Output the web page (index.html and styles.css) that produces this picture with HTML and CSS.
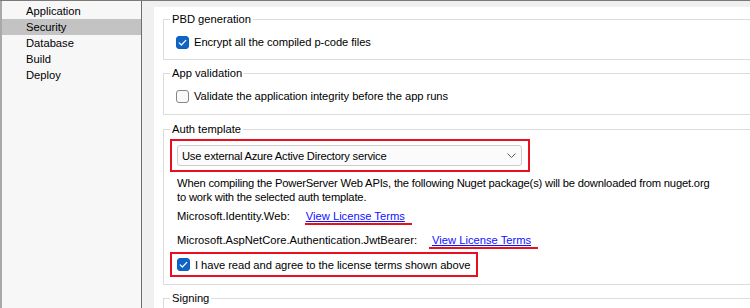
FILE: index.html
```html
<!DOCTYPE html>
<html lang="en">
<head>
<meta charset="utf-8">
<title>Security settings</title>
<link rel="stylesheet" href="styles.css">
</head>
<body>
<div class="window">
  <nav class="sidebar">
    <ul class="nav-list">
      <li class="nav-item">Application</li>
      <li class="nav-item is-selected">Security</li>
      <li class="nav-item">Database</li>
      <li class="nav-item">Build</li>
      <li class="nav-item">Deploy</li>
    </ul>
  </nav>
  <main class="main">
    <div class="panel">
      <fieldset class="group group-pbd">
        <legend class="group-title">PBD generation</legend>
        <label class="check-row">
          <span class="checkbox is-checked"><svg viewBox="0 0 13 13" width="13" height="13"><path d="M3.2 6.8 L5.4 9 L9.8 4.4" fill="none" stroke="#fff" stroke-width="1.2" stroke-linecap="round" stroke-linejoin="round"/></svg></span>
          <span class="check-label">Encrypt all the compiled p-code files</span>
        </label>
      </fieldset>

      <fieldset class="group group-app">
        <legend class="group-title">App validation</legend>
        <label class="check-row">
          <span class="checkbox"></span>
          <span class="check-label">Validate the application integrity before the app runs</span>
        </label>
      </fieldset>

      <fieldset class="group group-auth">
        <legend class="group-title">Auth template</legend>
        <div class="highlight highlight-select">
          <div class="select">
            <span class="select-value">Use external Azure Active Directory service</span>
            <svg class="select-arrow" viewBox="0 0 9 5" width="9" height="5"><path d="M0.5 0.5 L4.5 4.5 L8.5 0.5" fill="none" stroke="#5a5a5a" stroke-width="1"/></svg>
          </div>
        </div>
        <p class="note">When compiling the PowerServer Web APIs, the following Nuget package(s) will be downloaded from nuget.org<br>to work with the selected auth template.</p>
        <div class="pkg-row pkg-row-first">
          <span class="pkg-name">Microsoft.Identity.Web:</span>
          <span class="underline-mark mark-one"><a class="link" href="#">View License Terms</a></span>
        </div>
        <div class="pkg-row pkg-row-second">
          <span class="pkg-name">Microsoft.AspNetCore.Authentication.JwtBearer:</span>
          <span class="underline-mark mark-two"><a class="link" href="#">View License Terms</a></span>
        </div>
        <div class="highlight highlight-agree">
          <label class="check-row agree-row">
            <span class="checkbox is-checked"><svg viewBox="0 0 13 13" width="13" height="13"><path d="M3.2 6.8 L5.4 9 L9.8 4.4" fill="none" stroke="#fff" stroke-width="1.2" stroke-linecap="round" stroke-linejoin="round"/></svg></span>
            <span class="check-label">I have read and agree to the license terms shown above</span>
          </label>
        </div>
      </fieldset>

      <fieldset class="group group-signing">
        <legend class="group-title">Signing</legend>
        <div class="signing-body"></div>
      </fieldset>
    </div>
  </main>
</div>
</body>
</html>
```

FILE: styles.css
```css
* { box-sizing: border-box; }

html, body {
  margin: 0;
  padding: 0;
  width: 750px;
  height: 308px;
  overflow: hidden;
}

body {
  font-family: "Liberation Sans", Arial, sans-serif;
  font-size: 11.2px;
  color: #000;
  background: #f0f0f0;
}

.window {
  display: flex;
  height: 308px;
  border-top: 1px solid #7a7a7a;
}

/* Sidebar */
.sidebar {
  width: 142px;
  flex: none;
  background: #f7f7f7;
  border-left: 2px solid #a9a9a9;
  border-right: 1px solid #6e6e6e;
  padding-top: 2px;
}

.nav-list {
  list-style: none;
  margin: 0;
  padding: 0;
}

.nav-item {
  height: 16px;
  line-height: 16px;
  padding-left: 24px;
  white-space: nowrap;
}

.nav-item.is-selected {
  background: #c3c3c3;
}

/* Main area */
.main {
  flex: 1;
  display: flex;
  flex-direction: column;
  padding: 6px 0 0 12px;
  min-width: 0;
}

.panel {
  flex: 1;
  background: #fff;
  overflow: hidden;
  padding: 5px 0 0 9px;
}

/* Group boxes */
.group {
  width: 700px;
  margin: 0 0 6px 0;
  border: 1px solid #dcdcdc;
  padding: 7px 0 9px 12px;
  min-width: 0;
}

.group-title {
  margin-left: -6px;
  padding: 0 2px;
  line-height: 15px;
  height: 15px;
}

.group-app {
  padding-bottom: 10px;
  margin-bottom: 7px;
}

.group-auth {
  padding: 2px 0 7px 12px;
}

.group-signing {
  padding-top: 6px;
}

.signing-body {
  height: 30px;
}

/* Checkbox rows */
.check-row {
  display: flex;
  align-items: center;
  height: 16px;
  gap: 5px;
  white-space: nowrap;
}

.check-label {
  letter-spacing: -0.06px;
}

.checkbox {
  width: 13px;
  height: 13px;
  flex: none;
  border: 1px solid #868686;
  border-radius: 3px;
  background: #f9f9f9;
  display: flex;
}

.checkbox.is-checked {
  border-color: #0a5fc0;
  background: #0f64c4;
}

.checkbox svg {
  margin: -1px;
}

/* Red annotation boxes */
.highlight {
  border: 2px solid #e8101e;
  margin-left: -6px;
  width: fit-content;
}

.highlight-select {
  padding: 4px 6px 4px 5px;
}

.highlight-agree {
  margin-top: 3px;
  padding: 0 6px 0 5px;
}

.agree-row {
  height: 21px;
}

/* Dropdown */
.select {
  width: 345px;
  height: 21px;
  display: flex;
  align-items: center;
  justify-content: space-between;
  border: 1px solid #cccccc;
  border-radius: 3px;
  background: #fbfbfb;
  padding: 0 5px 0 4px;
  white-space: nowrap;
}

.select-value {
  letter-spacing: -0.22px;
}

.select-arrow {
  flex: none;
}

/* Texts */
.note {
  margin: 4px 0 0 1px;
  line-height: 14px;
  white-space: nowrap;
  letter-spacing: -0.18px;
}

.pkg-row {
  display: flex;
  align-items: flex-start;
  line-height: 13px;
  white-space: nowrap;
  padding-left: 1px;
}

.pkg-row-first {
  margin-top: 6px;
  gap: 15px;
}

.pkg-row-second {
  margin-top: 9px;
  gap: 12px;
}

.underline-mark {
  border-bottom: 2px solid #e8101e;
  padding-right: 7px;
}

.mark-one { padding-left: 1px; }
.mark-two { padding-left: 3px; }

.link {
  color: #1010ff;
  text-decoration: underline;
}
```
